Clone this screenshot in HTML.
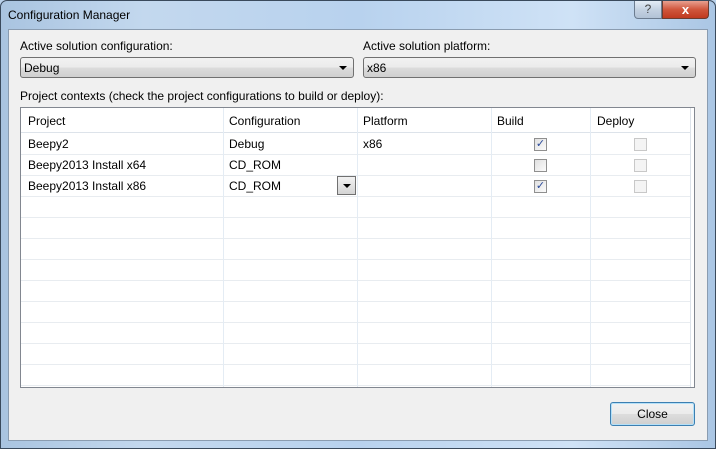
<!DOCTYPE html><html><head><style>
*{margin:0;padding:0;box-sizing:border-box}
body{width:716px;height:449px;overflow:hidden;background:#b9d1ea;font-family:"Liberation Sans",sans-serif;font-size:12px;color:#000;position:relative}
.a{position:absolute}
.frame{left:0;top:0;width:716px;height:449px;border:1px solid #3a4a5c;border-radius:7px 7px 0 0;background:linear-gradient(90deg,#a9c4e0 0%,#c3d8ee 20%,#b8d2ee 50%,#cfe2f6 80%,#aac6e4 100%)}
.client{left:8px;top:29px;width:700px;height:412px;background:#f0f0f0;border:1px solid #8a9cb0}
.combo{height:21px;border:1px solid #707070;border-radius:3px;background:linear-gradient(#f2f2f2,#ebebeb 50%,#dcdcdc 51%,#cfcfcf);padding:3px 3px;font-size:12px}
.arr{position:absolute;right:6px;top:8px;width:0;height:0;border-left:4px solid transparent;border-right:4px solid transparent;border-top:4px solid #000}
.grid{left:20px;top:107px;width:675px;height:281px;border:1px solid #828790;background:#fff;overflow:hidden}
.hl{position:absolute;left:0;width:670px;height:1px;background:#e8ecf0}
.vl{position:absolute;top:0;width:1px;height:281px;background:#e4ecf4}
.t{position:absolute;white-space:nowrap}
.cb{position:absolute;width:13px;height:13px;border:1px solid #8f8f8f;background:linear-gradient(135deg,#e0e0e0,#fbfbfb)}
.cb.d{border-color:#c8c8c8;background:#f4f4f4}
</style></head><body>
<div class="a frame"></div>
<div class="a t" style="left:8px;top:8px;font-size:12px">Configuration Manager</div>
<div class="a" style="left:634px;top:1px;width:28px;height:18px;border:1px solid #6c7c90;border-top:none;border-radius:0 0 0 4px;background:linear-gradient(#e4ecf6,#c4d2e2 50%,#b2c2d6);text-align:center;font-size:12px;color:#444;line-height:17px">?</div>
<div class="a" style="left:662px;top:1px;width:47px;height:18px;border:1px solid #6c3c30;border-top:none;border-radius:0 0 4px 0;background:linear-gradient(#e8a090,#d0563c 50%,#c03a20);text-align:center;font-size:13px;color:#fff;font-weight:bold;line-height:17px">x</div>
<div class="a client"></div>
<div class="a t" style="left:20px;top:39px">Active solution configuration:</div>
<div class="a t" style="left:363px;top:39px">Active solution platform:</div>
<div class="a combo" style="left:20px;top:57px;width:334px">Debug<div class="arr"></div></div>
<div class="a combo" style="left:363px;top:57px;width:333px">x86<div class="arr"></div></div>
<div class="a t" style="left:20px;top:89px">Project contexts (check the project configurations to build or deploy):</div>
<div class="a grid">
<div class="hl" style="top:24px;background:#dde3ea"></div>
<div class="hl" style="top:46px"></div><div class="hl" style="top:67px"></div><div class="hl" style="top:88px"></div><div class="hl" style="top:109px"></div><div class="hl" style="top:130px"></div><div class="hl" style="top:151px"></div><div class="hl" style="top:172px"></div><div class="hl" style="top:193px"></div><div class="hl" style="top:214px"></div><div class="hl" style="top:235px"></div><div class="hl" style="top:256px"></div><div class="hl" style="top:277px"></div>
<div class="vl" style="left:202px"></div><div class="vl" style="left:336px"></div><div class="vl" style="left:470px"></div><div class="vl" style="left:569px"></div><div class="vl" style="left:669px;background:#dde3ea"></div>
<div class="t" style="left:7px;top:6px">Project</div><div class="t" style="left:208px;top:6px">Configuration</div><div class="t" style="left:342px;top:6px">Platform</div><div class="t" style="left:476px;top:6px">Build</div><div class="t" style="left:576px;top:6px">Deploy</div>
<div class="t" style="left:7px;top:29px">Beepy2</div><div class="t" style="left:208px;top:29px">Debug</div><div class="t" style="left:342px;top:29px">x86</div>
<div class="t" style="left:7px;top:50px">Beepy2013 Install x64</div><div class="t" style="left:208px;top:50px">CD_ROM</div>
<div class="t" style="left:7px;top:71px">Beepy2013 Install x86</div><div class="t" style="left:208px;top:71px">CD_ROM</div>
<div style="position:absolute;left:316px;top:68px;width:19px;height:19px;border:1px solid #707070;background:linear-gradient(#f2f2f2,#d4d4d4)"><div class="arr" style="right:4px;top:7px"></div></div>
<div class="cb" style="left:513px;top:30px;color:#2a4a9a;font-size:11px;line-height:11px;text-align:center">✓</div>
<div class="cb" style="left:513px;top:51px"></div>
<div class="cb" style="left:513px;top:72px;color:#2a4a9a;font-size:11px;line-height:11px;text-align:center">✓</div>
<div class="cb d" style="left:613px;top:30px"></div><div class="cb d" style="left:613px;top:51px"></div><div class="cb d" style="left:613px;top:72px"></div>
</div>
<div class="a" style="left:610px;top:402px;width:85px;height:24px;border:1px solid #3c7fb1;border-radius:3px;background:linear-gradient(#f2f2f2,#ebebeb 50%,#dddddd 51%,#cfcfcf);box-shadow:inset 0 0 0 1px #b4e0f8;text-align:center;line-height:22px">Close</div>
</body></html>
